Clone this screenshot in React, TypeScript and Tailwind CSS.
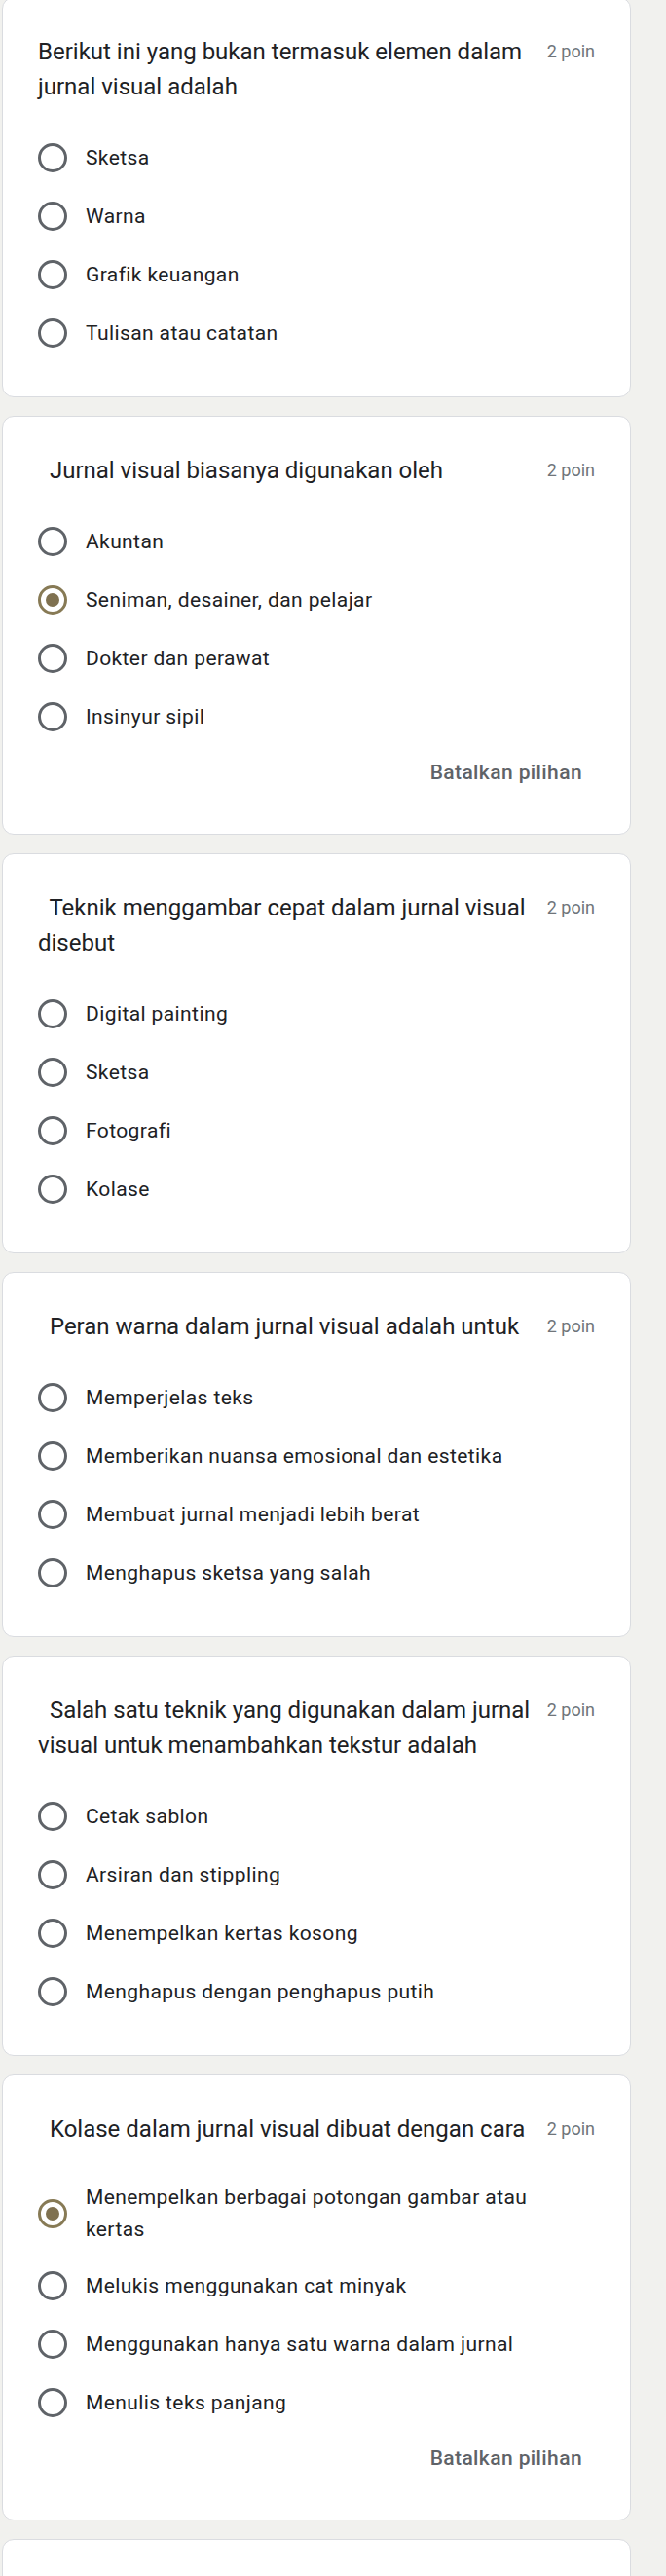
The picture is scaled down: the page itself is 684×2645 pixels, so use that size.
import React from "react";

type Q = {
  title: string;
  options: string[];
  selected?: number;
  clear?: boolean;
};

const questions: Q[] = [
  {
    title: "Berikut ini yang bukan termasuk elemen dalam\njurnal visual adalah",
    options: ["Sketsa", "Warna", "Grafik keuangan", "Tulisan atau catatan"],
  },
  {
    title: "  Jurnal visual biasanya digunakan oleh",
    options: ["Akuntan", "Seniman, desainer, dan pelajar", "Dokter dan perawat", "Insinyur sipil"],
    selected: 1,
    clear: true,
  },
  {
    title: "  Teknik menggambar cepat dalam jurnal visual\ndisebut",
    options: ["Digital painting", "Sketsa", "Fotografi", "Kolase"],
  },
  {
    title: "  Peran warna dalam jurnal visual adalah untuk",
    options: [
      "Memperjelas teks",
      "Memberikan nuansa emosional dan estetika",
      "Membuat jurnal menjadi lebih berat",
      "Menghapus sketsa yang salah",
    ],
  },
  {
    title: "  Salah satu teknik yang digunakan dalam jurnal\nvisual untuk menambahkan tekstur adalah",
    options: [
      "Cetak sablon",
      "Arsiran dan stippling",
      "Menempelkan kertas kosong",
      "Menghapus dengan penghapus putih",
    ],
  },
  {
    title: "  Kolase dalam jurnal visual dibuat dengan cara",
    options: [
      "Menempelkan berbagai potongan gambar atau\nkertas",
      "Melukis menggunakan cat minyak",
      "Menggunakan hanya satu warna dalam jurnal",
      "Menulis teks panjang",
    ],
    selected: 0,
    clear: true,
  },
];

function Radio({ checked }: { checked: boolean }) {
  if (checked) {
    return (
      <div className="w-[30px] h-[30px] shrink-0 rounded-full border-[3px] border-[#877a55] flex items-center justify-center">
        <div className="w-[14px] h-[14px] rounded-full bg-[#7f7150]" />
      </div>
    );
  }
  return <div className="w-[30px] h-[30px] shrink-0 rounded-full border-[3px] border-[#5f6368]" />;
}

function Card({ q, first }: { q: Q; first?: boolean }) {
  return (
    <div
      className={`ml-[2px] w-[646px] bg-white border border-[#dadce0] rounded-[12px] pt-[37px] pb-[35px] px-[36px] ${
        first ? "-mt-[3px]" : ""
      } mb-[19px]`}
    >
      <div className="flex items-start mb-[25px]">
        <div className="flex-1 min-w-0 whitespace-pre text-[24px] leading-[36px] text-[#202124]">{q.title}</div>
        <div className="shrink-0 ml-[20px] text-[18px] leading-[36px] text-[#70757a]">2 poin</div>
      </div>
      <div className="flex flex-col">
        {q.options.map((o, i) => (
          <div key={i} className="flex items-center min-h-[60px] py-[11px]">
            <Radio checked={q.selected === i} />
            <div className="ml-[19px] whitespace-pre text-[21px] leading-[33px] tracking-[0.4px] text-[#202124]">
              {o}
            </div>
          </div>
        ))}
      </div>
      {q.clear && (
        <div className="flex justify-end">
          <div className="h-[55px] flex items-center pr-[13px] text-[21px] font-medium tracking-[0.4px] text-[#5f6368]">
            Batalkan pilihan
          </div>
        </div>
      )}
    </div>
  );
}

export default function App() {
  return (
    <div
      className="w-[684px] h-[2645px] overflow-hidden bg-[#f1f1ee]"
      style={{ fontFamily: "Roboto, 'Noto Sans', sans-serif" }}
    >
      {questions.map((q, i) => (
        <Card key={i} q={q} first={i === 0} />
      ))}
      <div className="ml-[2px] w-[646px] h-[200px] bg-white border border-[#dadce0] rounded-[12px]" />
    </div>
  );
}
